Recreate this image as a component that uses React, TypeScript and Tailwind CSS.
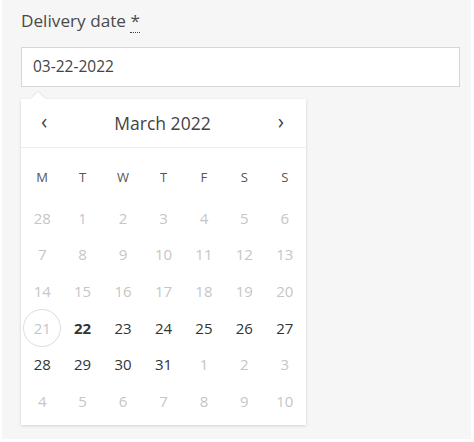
import React from 'react'

const weeks: { d: number; muted: boolean }[][] = [
  [28, 1, 2, 3, 4, 5, 6].map((d) => ({ d, muted: true })),
  [7, 8, 9, 10, 11, 12, 13].map((d) => ({ d, muted: true })),
  [14, 15, 16, 17, 18, 19, 20].map((d) => ({ d, muted: true })),
  [21, 22, 23, 24, 25, 26, 27].map((d) => ({ d, muted: d === 21 })),
  [28, 29, 30, 31, 1, 2, 3].map((d, i) => ({ d, muted: i > 3 })),
  [4, 5, 6, 7, 8, 9, 10].map((d) => ({ d, muted: true })),
]

const days = ['M', 'T', 'W', 'T', 'F', 'S', 'S']

export default function App() {
  return (
    <div className="w-[474px] h-[442px] bg-white pl-[2px]" style={{ fontFamily: '"Open Sans", sans-serif' }}>
      <div className="w-[469px] h-[439px] bg-[#f6f6f6] pl-[19px] pr-[11px] pt-[8px]">
        <label className="block text-[17.2px] leading-[26px] text-[#4a4a4a]">
          Delivery date{' '}
          <abbr title="required" className="no-underline border-b border-dotted border-[#444]">*</abbr>
        </label>
        <div className="mt-[13px] h-[40px] border border-[#d6d6d6] bg-white px-[11px] flex items-center text-[15.5px] text-[#444]">
          03-22-2022
        </div>

        <div className="relative mt-[12px] w-[285px] bg-white shadow-[0_1px_3px_rgba(0,0,0,0.15)]">
          <div className="absolute -top-[5px] left-[12px] w-[10px] h-[10px] rotate-45 bg-white shadow-[-1px_-1px_2px_rgba(0,0,0,0.06)]" />
          <div className="relative flex items-center justify-between h-[49px] pl-[20px] pr-[22px] border-b border-[#eee] text-[#444]">
            <span className="text-[21px] leading-none pb-[3px]">‹</span>
            <span className="text-[17.5px]">March 2022</span>
            <span className="text-[21px] leading-none pb-[3px]">›</span>
          </div>
          <div className="px-px pb-[6px]">
            <div className="grid grid-cols-7 h-[51px] items-center pt-[9px]">
              {days.map((d, i) => (
                <div key={i} className="text-center text-[13px] text-[#555]">{d}</div>
              ))}
            </div>
            {weeks.map((w, wi) => (
              <div key={wi} className="grid grid-cols-7 h-[36.6px] items-center">
                {w.map((c, ci) => (
                  <div key={ci} className="flex justify-center">
                    <div
                      className={
                        'w-[38px] h-[38px] rounded-full flex items-center justify-center text-[15px] ' +
                        (c.muted ? 'text-[#c6c6c6] ' : 'text-[#333] ') +
                        (wi === 3 && ci === 0 ? 'border border-[#ddd] ' : '') +
                        (wi === 3 && ci === 1 ? 'font-bold' : '')
                      }
                    >
                      {c.d}
                    </div>
                  </div>
                ))}
              </div>
            ))}
          </div>
        </div>
      </div>
    </div>
  )
}
